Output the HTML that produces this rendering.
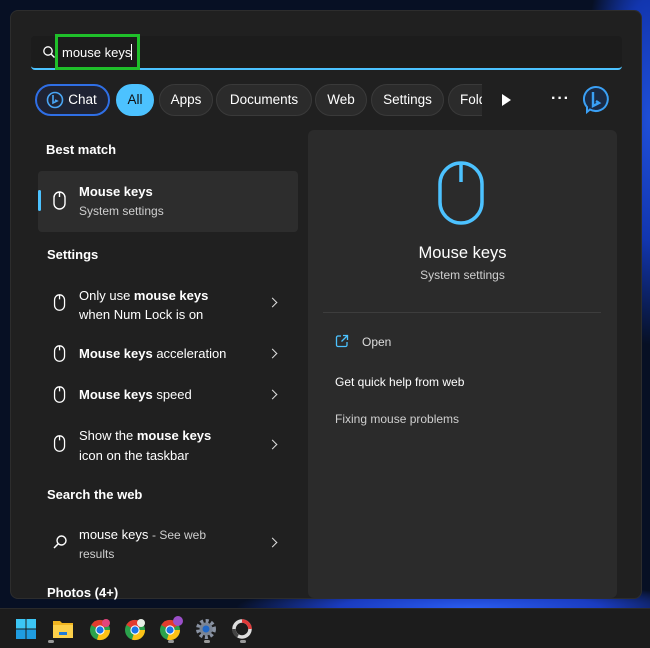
<!DOCTYPE html>
<html><head><meta charset="utf-8"><style>
*{margin:0;padding:0;box-sizing:border-box}
body{width:650px;height:648px;overflow:hidden;position:relative;font-family:"Liberation Sans",sans-serif;color:#fff;
background:radial-gradient(ellipse 90px 300px at 650px 120px,#1f4fd8 0%,#1236b0 40%,transparent 75%),radial-gradient(ellipse 260px 30px at 470px 608px,#2a5cf0 0%,#1a3cc0 50%,transparent 90%),#071024}
.a{position:absolute;white-space:nowrap}
#panel{position:absolute;left:10px;top:10px;width:632px;height:589px;background:#202020;border-radius:8px;border:1px solid #2d2d2d}
#search{position:absolute;left:31px;top:36px;width:591px;height:34px;background:#1c1c1c;border-radius:4px;border-bottom:2px solid #4cc2ff}
.pill{position:absolute;top:84px;height:32px;border-radius:16px;background:#2b2b2b;border:1px solid #3a3a3a;font-size:13.5px;line-height:30px;text-align:center;color:#fff}
#right{position:absolute;left:308px;top:130px;width:309px;height:468px;background:#2b2b2b;border-radius:6px}
.h{font-size:13px;font-weight:bold;color:#fff}
.t{font-size:13px;color:#fff}
.s{font-size:12px;color:#cfcfcf}
.chev{position:absolute;width:7px;height:7px;border-right:1.5px solid #ddd;border-top:1.5px solid #ddd;transform:rotate(45deg)}
#task{position:absolute;left:0;top:608px;width:650px;height:40px;background:#1c1c1c;border-top:1px solid #2a2a2a}
.dot{position:absolute;top:640px;width:6px;height:3px;border-radius:2px;background:#999}
</style></head><body>
<div id="panel"></div>
<div id="search"></div>
<svg class="a" style="left:42px;top:45px" width="14" height="14" viewBox="0 0 14 14"><circle cx="6" cy="6" r="4.2" fill="none" stroke="#fff" stroke-width="1.3"/><path d="M9 9L12.5 12.5" stroke="#fff" stroke-width="1.4"/></svg>
<div class="a" style="left:55px;top:34px;width:85px;height:36px;border:3px solid #1fbf2a"></div>
<div class="a t" style="left:62px;top:44px;font-size:13px">mouse keys<span style="display:inline-block;width:1px;height:16px;background:#fff;vertical-align:-3px"></span></div>

<div class="pill" style="left:35px;width:75px;background:#1f2333;border:2px solid #2f6fe6;line-height:28px;padding-left:20px">Chat</div>
<svg class="a" style="left:46px;top:91px" width="18" height="18" viewBox="0 0 18 18"><circle cx="9" cy="9" r="7.5" fill="none" stroke="#4aa6f5" stroke-width="1.6"/><path d="M7 4v8l4-2-2-1" fill="none" stroke="#4aa6f5" stroke-width="1.6"/></svg>
<div class="pill" style="left:116px;width:38px;background:#4cc2ff;border-color:#4cc2ff;color:#111">All</div>
<div class="pill" style="left:159px;width:54px">Apps</div>
<div class="pill" style="left:216px;width:96px">Documents</div>
<div class="pill" style="left:315px;width:52px">Web</div>
<div class="pill" style="left:371px;width:73px">Settings</div>
<div class="pill" style="left:448px;width:40px;border-radius:16px 0 0 16px;border-right:none;text-align:left;padding-left:11px;overflow:hidden">Folders</div>
<div class="a" style="left:482px;top:84px;width:6px;height:34px;background:#202020"></div>
<div class="a" style="left:502px;top:94px;width:0;height:0;border-left:9px solid #fff;border-top:6px solid transparent;border-bottom:6px solid transparent"></div>
<div class="a" style="left:551px;top:90px;font-size:16px;font-weight:bold;letter-spacing:1px">···</div>
<svg class="a" style="left:580px;top:84px" width="32" height="32" viewBox="0 0 32 32"><path d="M16 3a12 12 0 1 1-6 22.5L7 28v-5A12 12 0 0 1 16 3z" fill="#1a2a44" stroke="#3aa0f5" stroke-width="2"/><path d="M13 8v14l6-3-3-2" fill="none" stroke="#3aa0f5" stroke-width="2.4"/></svg>

<div class="a h" style="left:46px;top:142px">Best match</div>
<div class="a" style="left:38px;top:171px;width:260px;height:61px;background:#2d2d2d;border-radius:4px"></div>
<div class="a" style="left:38px;top:190px;width:3px;height:21px;background:#4cc2ff;border-radius:2px"></div>
<svg class="a" style="left:52px;top:190px" width="16" height="22" viewBox="0 0 16 22"><rect x="2" y="2" width="11" height="17" rx="5.5" fill="none" stroke="#fff" stroke-width="1.4"/><path d="M7.5 2v5" stroke="#fff" stroke-width="1.4"/></svg>
<div class="a h" style="left:79px;top:184px">Mouse keys</div>
<div class="a s" style="left:79px;top:204px">System settings</div>

<div class="a h" style="left:47px;top:247px">Settings</div>
<svg class="a" style="left:52px;top:293px" width="16" height="20" viewBox="0 0 16 22"><rect x="2" y="2" width="11" height="17" rx="5.5" fill="none" stroke="#fff" stroke-width="1.4"/><path d="M7.5 2v5" stroke="#fff" stroke-width="1.4"/></svg>
<div class="a t" style="left:79px;top:288px">Only use <b>mouse keys</b></div>
<div class="a t" style="left:79px;top:307px">when Num Lock is on</div>
<div class="chev" style="left:269px;top:299px"></div>
<svg class="a" style="left:52px;top:344px" width="16" height="20" viewBox="0 0 16 22"><rect x="2" y="2" width="11" height="17" rx="5.5" fill="none" stroke="#fff" stroke-width="1.4"/><path d="M7.5 2v5" stroke="#fff" stroke-width="1.4"/></svg>
<div class="a t" style="left:79px;top:346px"><b>Mouse keys</b> acceleration</div>
<div class="chev" style="left:269px;top:350px"></div>
<svg class="a" style="left:52px;top:385px" width="16" height="20" viewBox="0 0 16 22"><rect x="2" y="2" width="11" height="17" rx="5.5" fill="none" stroke="#fff" stroke-width="1.4"/><path d="M7.5 2v5" stroke="#fff" stroke-width="1.4"/></svg>
<div class="a t" style="left:79px;top:387px"><b>Mouse keys</b> speed</div>
<div class="chev" style="left:269px;top:391px"></div>
<svg class="a" style="left:52px;top:434px" width="16" height="20" viewBox="0 0 16 22"><rect x="2" y="2" width="11" height="17" rx="5.5" fill="none" stroke="#fff" stroke-width="1.4"/><path d="M7.5 2v5" stroke="#fff" stroke-width="1.4"/></svg>
<div class="a t" style="left:79px;top:428px">Show the <b>mouse keys</b></div>
<div class="a t" style="left:79px;top:448px">icon on the taskbar</div>
<div class="chev" style="left:269px;top:441px"></div>

<div class="a h" style="left:47px;top:487px">Search the web</div>
<svg class="a" style="left:52px;top:534px" width="16" height="16" viewBox="0 0 16 16"><circle cx="9.5" cy="6.5" r="4.5" fill="none" stroke="#fff" stroke-width="1.4"/><path d="M6.3 9.7L2 14" stroke="#fff" stroke-width="1.5"/></svg>
<div class="a t" style="left:79px;top:527px">mouse keys <span style="font-size:12px;color:#cfcfcf">- See web</span></div>
<div class="a s" style="left:79px;top:547px">results</div>
<div class="chev" style="left:269px;top:539px"></div>
<div class="a h" style="left:47px;top:585px">Photos (4+)</div>

<div id="right"></div>
<svg class="a" style="left:437px;top:160px" width="48" height="66" viewBox="0 0 48 66"><rect x="3" y="3" width="42" height="60" rx="21" fill="none" stroke="#4cc2ff" stroke-width="3.5"/><path d="M24 3v19" stroke="#4cc2ff" stroke-width="3.5"/></svg>
<div class="a" style="left:308px;width:309px;top:244px;text-align:center;font-size:16.5px">Mouse keys</div>
<div class="a" style="left:308px;width:309px;top:268px;text-align:center;font-size:12px;color:#cfcfcf">System settings</div>
<div class="a" style="left:323px;top:312px;width:278px;height:1px;background:#3d3d3d"></div>
<svg class="a" style="left:335px;top:334px" width="14" height="14" viewBox="0 0 14 14"><path d="M6 2H3a1.5 1.5 0 0 0-1.5 1.5v7.5A1.5 1.5 0 0 0 3 12.5h7.5A1.5 1.5 0 0 0 12 11V8M8 1.5h4.5V6M12.5 1.5L6.5 7.5" fill="none" stroke="#4cc2ff" stroke-width="1.3"/></svg>
<div class="a" style="left:362px;top:335px;font-size:12px;color:#ddd">Open</div>
<div class="a" style="left:335px;top:375px;font-size:12px;color:#fff">Get quick help from web</div>
<div class="a" style="left:335px;top:412px;font-size:12px;color:#cfcfcf">Fixing mouse problems</div>

<div id="task"></div>
<svg class="a" style="left:15px;top:618px" width="22" height="22" viewBox="0 0 22 22"><rect x="1" y="1" width="9.5" height="9.5" fill="#3cc6f5"/><rect x="11.5" y="1" width="9.5" height="9.5" fill="#3cc6f5"/><rect x="1" y="11.5" width="9.5" height="9.5" fill="#1f9ce0"/><rect x="11.5" y="11.5" width="9.5" height="9.5" fill="#1f9ce0"/></svg>
<svg class="a" style="left:52px;top:618px" width="22" height="22" viewBox="0 0 22 22"><path d="M1 3h7l2 2h11v15H1z" fill="#f0b520"/><rect x="1" y="7" width="20" height="13" fill="#fcd04a"/><rect x="7" y="14" width="8" height="3" fill="#1f7ad8"/></svg>
<div class="dot" style="left:48px"></div>
<svg class="a" style="left:88px;top:618px" width="24" height="24" viewBox="0 0 24 24"><circle cx="12" cy="12" r="10" fill="#2ba24c"/><path d="M12 12L3.3 7A10 10 0 0 1 20.7 7z" fill="#e33b2e"/><path d="M12 12h10A10 10 0 0 1 9 21.6z" fill="#fbc116"/><circle cx="12" cy="12" r="4.6" fill="#fff"/><circle cx="12" cy="12" r="3.6" fill="#1a73e8"/><circle cx="18" cy="5" r="4" fill="#e2457c"/></svg>
<svg class="a" style="left:123px;top:618px" width="24" height="24" viewBox="0 0 24 24"><circle cx="12" cy="12" r="10" fill="#2ba24c"/><path d="M12 12L3.3 7A10 10 0 0 1 20.7 7z" fill="#e33b2e"/><path d="M12 12h10A10 10 0 0 1 9 21.6z" fill="#fbc116"/><circle cx="12" cy="12" r="4.6" fill="#fff"/><circle cx="12" cy="12" r="3.6" fill="#1a73e8"/><circle cx="18" cy="5" r="4" fill="#e8f0e8"/></svg>
<svg class="a" style="left:158px;top:614px" width="28" height="28" viewBox="0 0 28 28"><circle cx="12" cy="16" r="10" fill="#2ba24c"/><path d="M12 16L3.3 11A10 10 0 0 1 20.7 11z" fill="#e33b2e"/><path d="M12 16h10A10 10 0 0 1 9 25.6z" fill="#fbc116"/><circle cx="12" cy="16" r="4.6" fill="#fff"/><circle cx="12" cy="16" r="3.6" fill="#1a73e8"/><circle cx="20" cy="7" r="5" fill="#9b4fc9"/></svg>
<div class="dot" style="left:168px"></div>
<svg class="a" style="left:195px;top:618px" width="22" height="22" viewBox="0 0 22 22"><circle cx="11" cy="11" r="8" fill="none" stroke="#8a93a3" stroke-width="4" stroke-dasharray="3 2.3"/><circle cx="11" cy="11" r="6.5" fill="#7a8494"/><circle cx="11" cy="11" r="3.5" fill="#2068c8"/></svg>
<div class="dot" style="left:204px"></div>
<svg class="a" style="left:231px;top:618px" width="22" height="22" viewBox="0 0 22 22"><circle cx="11" cy="11" r="8" fill="none" stroke="#ddd" stroke-width="3.5"/><path d="M11 3a8 8 0 0 1 8 8" fill="none" stroke="#e03a3a" stroke-width="3.5"/><path d="M3 11a8 8 0 0 0 4 7" fill="none" stroke="#444" stroke-width="3.5"/></svg>
<div class="dot" style="left:240px"></div>
</body></html>
